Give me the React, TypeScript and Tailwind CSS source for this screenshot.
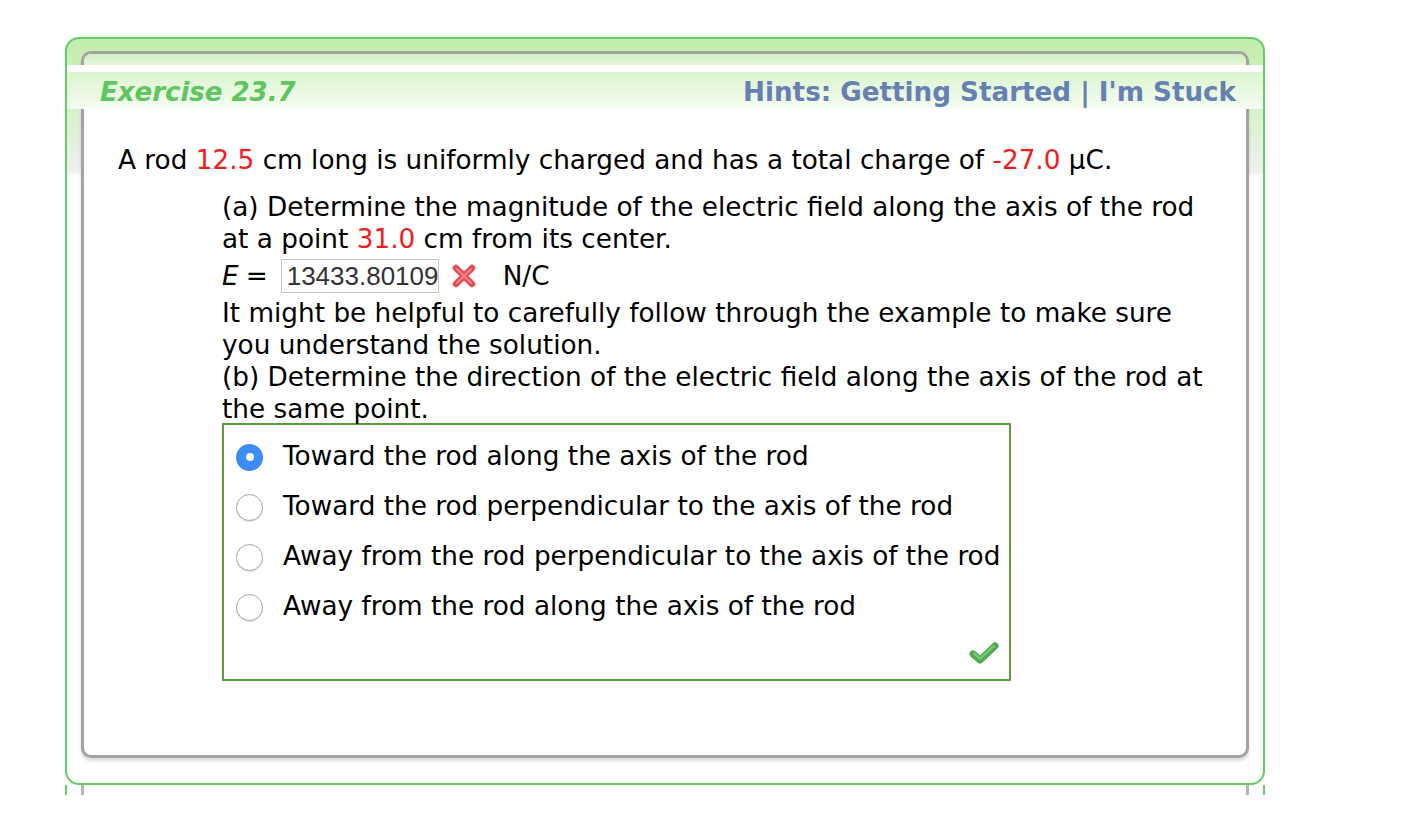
import React from "react";

const options = [
  "Toward the rod along the axis of the rod",
  "Toward the rod perpendicular to the axis of the rod",
  "Away from the rod perpendicular to the axis of the rod",
  "Away from the rod along the axis of the rod",
];

function Red({ children }: { children: React.ReactNode }) {
  return <span className="text-[#f21c1c]">{children}</span>;
}

function WrongMark() {
  return (
    <svg width="26" height="26" viewBox="0 0 26 26">
      <path
        d="M5 5 L21 21 M21 5 L5 21"
        stroke="#ec4b52"
        strokeWidth="6.5"
        strokeLinecap="round"
      />
      <path
        d="M6 6 L20 20 M20 6 L6 20"
        stroke="#f6868a"
        strokeWidth="2"
        strokeLinecap="round"
      />
    </svg>
  );
}

function CheckMark() {
  return (
    <svg width="30" height="24" viewBox="0 0 30 24">
      <path
        d="M4 13 L11 19 L26 5"
        fill="none"
        stroke="#4fa94f"
        strokeWidth="7"
        strokeLinecap="round"
        strokeLinejoin="round"
      />
      <path
        d="M5 12.5 L11 17.5 L25 5"
        fill="none"
        stroke="#74c774"
        strokeWidth="2.5"
        strokeLinecap="round"
        strokeLinejoin="round"
      />
    </svg>
  );
}

function Radio({ checked }: { checked: boolean }) {
  if (checked) {
    return (
      <div className="w-[27px] h-[27px] rounded-full bg-[#3b8cf5] flex items-center justify-center shrink-0">
        <div className="w-[8px] h-[8px] rounded-full bg-white" />
      </div>
    );
  }
  return (
    <div className="w-[27px] h-[27px] rounded-full border border-[#a8a8a8] bg-white shadow-[0_1px_1px_rgba(0,0,0,0.12)] shrink-0" />
  );
}

export default function App() {
  return (
    <div className="min-h-[826px] bg-white pt-[37px] pl-[65px] font-['DejaVu_Sans',Verdana,sans-serif] text-black">
      <div className="w-[1200px]">
        <div className="h-[748px] border-2 border-[#62cf62] rounded-[14px] bg-[linear-gradient(to_bottom,#c3ecae_0px,#d3f2c3_60px,#efefef_132px,#ffffff_138px)] px-[14px] pt-[12px]">
          <div className="h-[707px] border-[3px] border-[#a3a3a3] rounded-[10px] bg-white shadow-[0_3px_3px_rgba(0,0,0,0.14)] flex flex-col">
            <div className="h-[11px] rounded-t-[7px] bg-[linear-gradient(to_bottom,#cfefbf,#e4f6da)]" />
            <div className="h-[7px] -mx-[17px] bg-white" />
            <div className="h-[37px] -mx-[17px] flex items-center justify-between pl-[33px] pr-[27px] pt-[3px] bg-[linear-gradient(to_bottom,#dcf4cf,#f6fcf3)]">
              <span className="text-[26px] font-bold italic text-[#5ec65e] leading-none">
                Exercise 23.7
              </span>
              <span className="text-[26.2px] font-bold text-[#6580b1] leading-none">
                Hints: Getting Started | I'm Stuck
              </span>
            </div>

            <div className="pt-[35px] pl-[34px] text-[26.3px] leading-[32px]">
              <div>
                A rod <Red>12.5</Red> cm long is uniformly charged and has a
                total charge of <Red>-27.0</Red> μC.
              </div>
              <div className="pl-[104px] mt-[15px]">
                <div>
                  (a) Determine the magnitude of the electric field along the
                  axis of the rod
                </div>
                <div>
                  at a point <Red>31.0</Red> cm from its center.
                </div>
                <div className="h-[42px] flex items-center">
                  <span className="italic">E</span>
                  <span className="ml-[7px]">=</span>
                  <div className="ml-[13px] w-[158px] h-[34px] border border-[#c4c4c4] overflow-hidden whitespace-nowrap pl-[5px] font-['Liberation_Sans',Arial,sans-serif] text-[26px] leading-[32px] text-[#333]">
                    13433.80109
                  </div>
                  <div className="ml-[12px] flex items-center">
                    <WrongMark />
                  </div>
                  <span className="ml-[26px]">N/C</span>
                </div>
                <div>
                  It might be helpful to carefully follow through the example
                  to make sure
                </div>
                <div>you understand the solution.</div>
                <div>
                  (b) Determine the direction of the electric field along the
                  axis of the rod at
                </div>
                <div>the same point.</div>
                <div className="-mt-[2px] w-[789px] h-[258px] border-2 border-[#5f9b3d] pt-[7px] pl-[12px] pr-[10px] flex flex-col">
                  {options.map((o, i) => (
                    <div key={i} className="h-[50px] flex items-center">
                      <Radio checked={i === 0} />
                      <span className="ml-[20px] -mt-[2px] whitespace-nowrap">
                        {o}
                      </span>
                    </div>
                  ))}
                  <div className="flex justify-end mt-[9px]">
                    <CheckMark />
                  </div>
                </div>
              </div>
            </div>
          </div>
        </div>
        <div className="h-[10px] flex">
          <div className="w-[2px] bg-[#62cf62]" />
          <div className="w-[14px]" />
          <div className="w-[3px] bg-[#b5b5b5]" />
          <div className="flex-1" />
          <div className="w-[3px] bg-[#b5b5b5]" />
          <div className="w-[14px]" />
          <div className="w-[2px] bg-[#62cf62]" />
        </div>
      </div>
    </div>
  );
}
